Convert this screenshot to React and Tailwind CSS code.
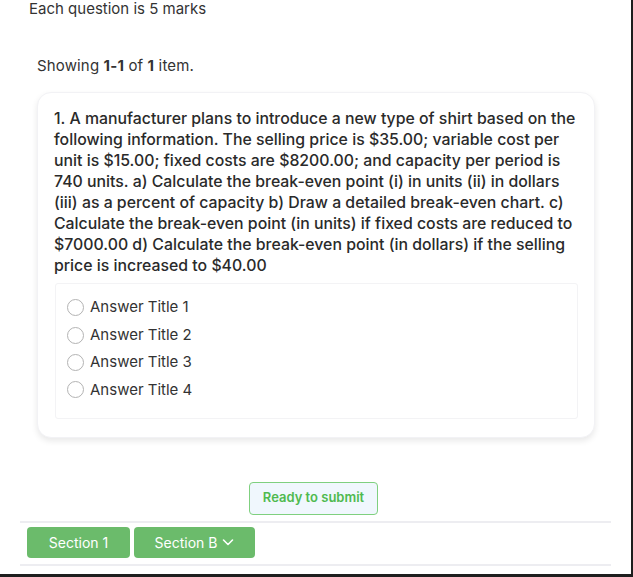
import React from 'react'

const QUESTION =
  '1. A manufacturer plans to introduce a new type of shirt based on the following information. The selling price is $35.00; variable cost per unit is $15.00; fixed costs are $8200.00; and capacity per period is 740 units. a) Calculate the break-even point (i) in units (ii) in dollars (iii) as a percent of capacity b) Draw a detailed break-even chart. c) Calculate the break-even point (in units) if fixed costs are reduced to $7000.00 d) Calculate the break-even point (in dollars) if the selling price is increased to $40.00'

const answers = ['Answer Title 1', 'Answer Title 2', 'Answer Title 3', 'Answer Title 4']

function Radio({ label }) {
  return (
    <label className="flex items-center h-[27.4px] gap-[6px]">
      <span className="w-[17px] h-[17px] rounded-full border-[1.5px] border-[#b3b3b3] bg-white shrink-0" />
      <span className="text-[15px] text-[#333]">{label}</span>
    </label>
  )
}

export default function App() {
  return (
    <div
      className="w-[633px] h-[577px] bg-white border-r-2 border-b-[3px] border-[#1e1e1e] overflow-hidden text-[#2b2b2b]"
      style={{ fontFamily: 'Inter, "Noto Sans", sans-serif' }}
    >
      <div className="pl-[29px] text-[15px] leading-[18px] text-[#333]">Each question is 5 marks</div>

      <div className="pl-[37px] mt-[39px] text-[15px] leading-[18px] text-[#333] tracking-[0.01em]">
        Showing <b className="font-bold">1-1</b> of <b className="font-bold">1</b> item.
      </div>

      <div className="ml-[37px] mt-[17px] w-[558px] rounded-[14px] border border-[#f2f2f5] bg-white shadow-[0_3px_6px_rgba(0,0,0,0.09)] pl-[15px] pr-[14px] pt-[15px] pb-[18px]">
        <p className="text-[15.85px] leading-[21px] font-medium text-[#2a2a2a] pl-[1px]">{QUESTION}</p>

        <div className="mt-[7px] ml-[2px] mr-[2px] border border-[#f3f3f5] rounded-[3px] pl-[11px] pt-[10px] pb-[14px]">
          {answers.map(a => (
            <Radio key={a} label={a} />
          ))}
        </div>
      </div>

      <div className="flex justify-center mt-[44px] pr-[4px]">
        <button className="w-[129px] h-[33px] rounded-[4px] border-[1.5px] border-[#7fd07f] bg-[#f0f7fd] text-[13px] font-semibold text-[#4fba4f]">
          Ready to submit
        </button>
      </div>

      <div className="mx-[20px] mt-[6px] w-[591px] h-[2px] bg-[#ededf1]" />

      <div className="flex gap-[4px] pl-[27px] mt-[4px]">
        <button className="w-[103px] h-[31px] rounded-[4px] bg-[#6bbb6b] text-white text-[14px]">Section 1</button>
        <button className="w-[121px] h-[31px] rounded-[4px] bg-[#6bbb6b] text-white text-[14px] flex items-center justify-center gap-[5px]">
          Section B
          <svg width="12" height="8" viewBox="0 0 12 8" fill="none" stroke="currentColor" strokeWidth="1.6" strokeLinecap="round" strokeLinejoin="round">
            <path d="M1.5 2l4.5 4.5L10.5 2" />
          </svg>
        </button>
      </div>

      <div className="mx-[20px] mt-[6px] w-[591px] h-[2px] bg-[#ededf1]" />
    </div>
  )
}
